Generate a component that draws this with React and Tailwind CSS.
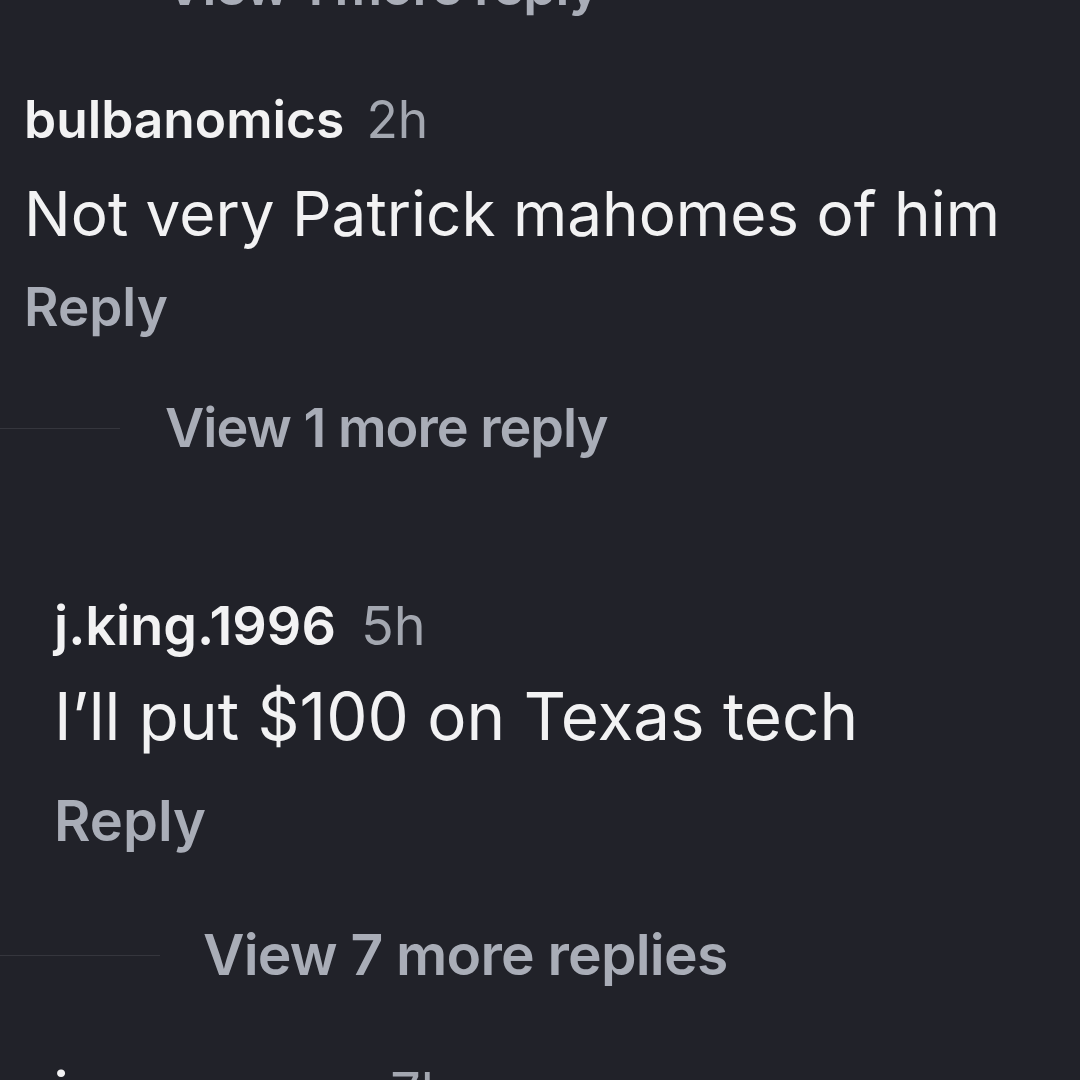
const font = { fontFamily: "Inter, 'Noto Sans', sans-serif" };

const App = () => {
  return (
    <div
      className="w-[1080px] h-[1080px] overflow-hidden bg-[#212229] text-[#f2f2f3]"
      style={font}
    >
      {/* tail of the previous thread */}
      <div className="mt-[-44px] h-[60px] flex items-center">
        <div className="w-[120px] h-px bg-[#35363d]" />
        <span className="ml-[45px] text-[53px] leading-[60px] font-semibold text-[#a9adb7] tracking-[-1px]">
          View 1 more reply
        </span>
      </div>

      <div className="pl-[24px]">
        <p className="mt-[73px] h-[60px] text-[51.5px] leading-[60px] font-semibold">
          bulbanomics
          <span className="ml-[22px] font-normal text-[#a3a7b0]">2h</span>
        </p>
        <p className="mt-[25px] h-[80px] text-[62px] leading-[80px]">
          Not very Patrick mahomes of him
        </p>
        <p className="mt-[23px] h-[60px] text-[53px] leading-[60px] font-semibold text-[#a9adb7]">
          Reply
        </p>
      </div>

      <div className="mt-[61px] h-[60px] flex items-center">
        <div className="w-[120px] h-px bg-[#35363d]" />
        <span className="ml-[45px] text-[54px] leading-[60px] font-semibold text-[#a9adb7] tracking-[-1px]">
          View 1 more reply
        </span>
      </div>

      <div className="pl-[54px]">
        <p className="mt-[138px] h-[60px] text-[54px] leading-[60px] font-semibold">
          j.king.1996
          <span className="ml-[25px] font-normal text-[#a3a7b0]">5h</span>
        </p>
        <p className="mt-[21px] h-[80px] text-[65.5px] leading-[80px]">
          I’ll put $100 on Texas tech
        </p>
        <p className="mt-[34px] h-[60px] text-[56px] leading-[60px] font-semibold text-[#a9adb7]">
          Reply
        </p>
      </div>

      <div className="mt-[74px] h-[60px] flex items-center">
        <div className="w-[160px] h-px bg-[#35363d]" />
        <span className="ml-[43px] text-[57px] leading-[60px] font-semibold text-[#a9adb7] tracking-[-0.8px]">
          View 7 more replies
        </span>
      </div>

      <div className="pl-[54px]">
        <p className="mt-[77px] h-[60px] text-[54px] leading-[60px] font-semibold">
          j.anaconnor
          <span className="ml-[25px] font-normal text-[#a3a7b0]">7h</span>
        </p>
      </div>
    </div>
  );
};

export default App;
